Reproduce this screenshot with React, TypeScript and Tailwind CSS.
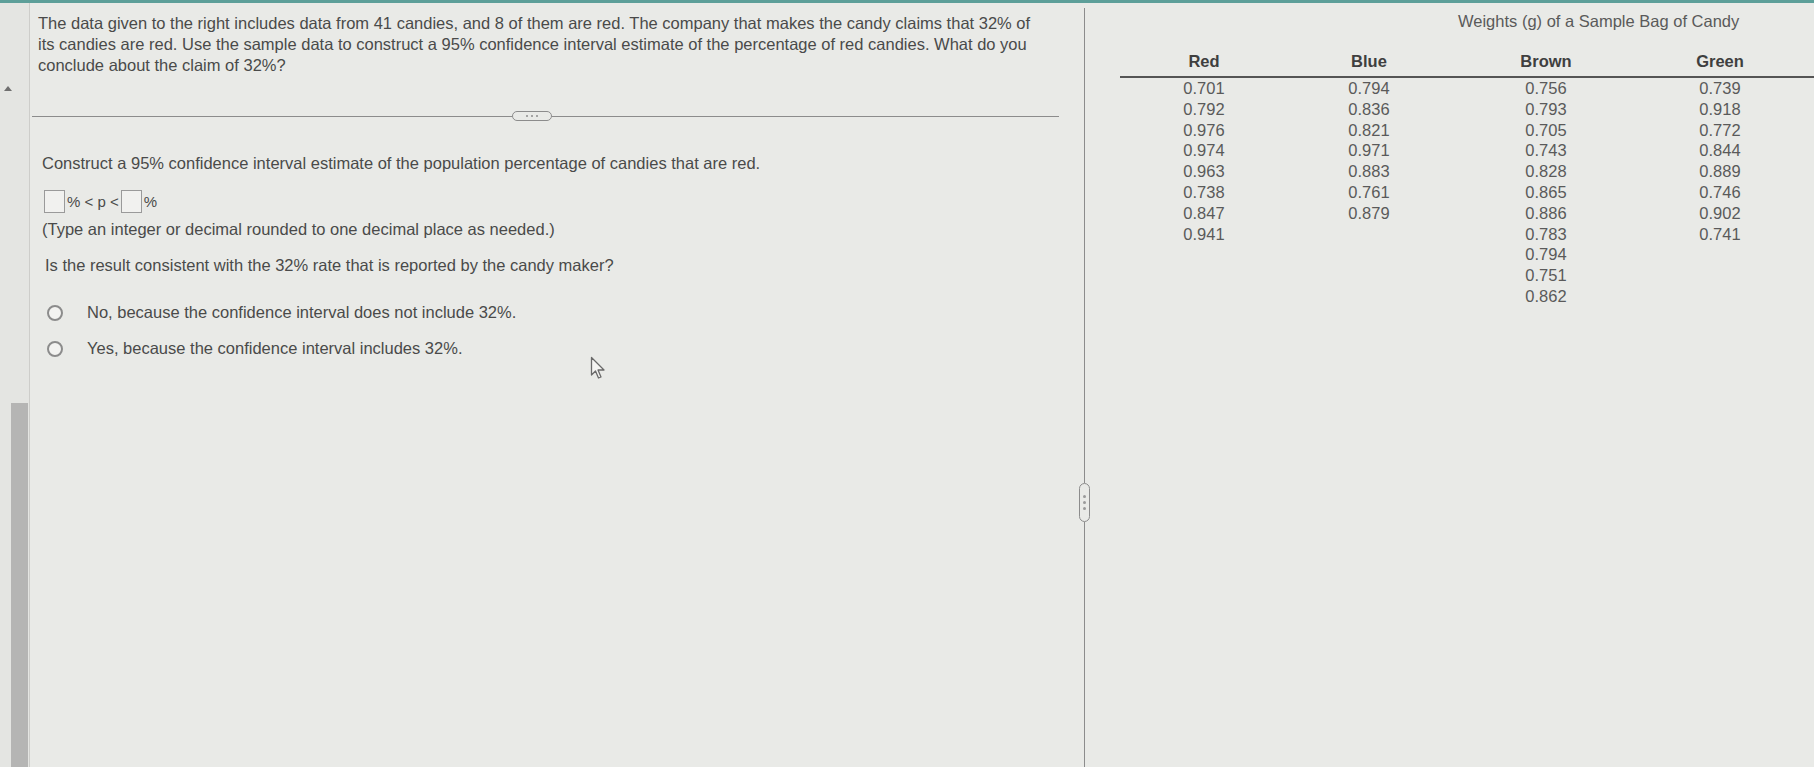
const columns: { name: string; values: string[] }[] = [
  { name: 'Red', values: ['0.701', '0.792', '0.976', '0.974', '0.963', '0.738', '0.847', '0.941'] },
  { name: 'Blue', values: ['0.794', '0.836', '0.821', '0.971', '0.883', '0.761', '0.879'] },
  {
    name: 'Brown',
    values: ['0.756', '0.793', '0.705', '0.743', '0.828', '0.865', '0.886', '0.783', '0.794', '0.751', '0.862'],
  },
  { name: 'Green', values: ['0.739', '0.918', '0.772', '0.844', '0.889', '0.746', '0.902', '0.741'] },
]

function ScrollStrip() {
  return (
    <div className="w-[30px] shrink-0 flex flex-col border-r border-[#cdcdca] bg-[#e4e5e2]">
      <div className="pt-[83px] pl-[4px] h-[89px]">
        <div className="w-0 h-0 border-l-[4px] border-r-[4px] border-b-[5px] border-l-transparent border-r-transparent border-b-[#6f6f6f]" />
      </div>
      <div className="mt-[311px] ml-[11px] w-[17px] flex-1 bg-[#b5b5b4]" />
    </div>
  )
}

function InputBox() {
  return <span className="inline-block w-[21px] h-[23px] border border-[#9a9a9a] bg-[#f1f1ef]" />
}

function Radio({ label }: { label: string }) {
  return (
    <div className="flex items-center h-[21px]">
      <span className="ml-[9px] w-[16px] h-[16px] rounded-full border-2 border-[#8c8c8c] bg-[#f3f3f1]" />
      <span className="ml-[24px]">{label}</span>
    </div>
  )
}

function LeftPanel() {
  return (
    <div className="w-[1048px] shrink-0 pl-[8px] pr-[19px] pt-[10px] text-[16.5px] leading-[21px]">
      <p>
        The data given to the right includes data from 41 candies, and 8 of them are red. The company that makes the candy
        claims that 32% of
        <br />
        its candies are red. Use the sample data to construct a 95% confidence interval estimate of the percentage of red
        candies. What do you
        <br />
        conclude about the claim of 32%?
      </p>

      <div className="mt-[35px] -ml-[6px] h-[10px] flex items-center">
        <div className="h-px w-[480px] bg-[#8c8c8c]" />
        <div className="w-[40px] h-[10px] rounded-full border border-[#8c8c8c] flex items-center justify-center gap-[3px]">
          <span className="w-[2px] h-[2px] rounded-full bg-[#8c8c8c]" />
          <span className="w-[2px] h-[2px] rounded-full bg-[#8c8c8c]" />
          <span className="w-[2px] h-[2px] rounded-full bg-[#8c8c8c]" />
        </div>
        <div className="h-px flex-1 bg-[#8c8c8c]" />
      </div>

      <p className="mt-[32px] pl-[4px]">
        Construct a 95% confidence interval estimate of the population percentage of candies that are red.
      </p>

      <div className="mt-[16px] pl-[6px] flex items-center h-[23px] text-[15px]">
        <InputBox />
        <span className="mx-[2px]">% &lt; p &lt;</span>
        <InputBox />
        <span className="ml-[2px]">%</span>
      </div>

      <p className="mt-[6px] pl-[4px]">(Type an integer or decimal rounded to one decimal place as needed.)</p>

      <p className="mt-[15px] pl-[7px]">Is the result consistent with the 32% rate that is reported by the candy maker?</p>

      <div className="mt-[26px]">
        <Radio label="No, because the confidence interval does not include 32%." />
      </div>
      <div className="mt-[15px]">
        <Radio label="Yes, because the confidence interval includes 32%." />
      </div>
    </div>
  )
}

function Divider() {
  return (
    <div className="w-[12px] shrink-0 flex flex-col items-center pt-[5px]">
      <div className="w-px h-[475px] bg-[#8c8c8c]" />
      <div className="w-[11px] h-[39px] rounded-full border border-[#8c8c8c] flex flex-col items-center justify-center gap-[3px]">
        <span className="w-[3px] h-[3px] rounded-full bg-[#9a9a9a]" />
        <span className="w-[3px] h-[3px] rounded-full bg-[#9a9a9a]" />
        <span className="w-[3px] h-[3px] rounded-full bg-[#9a9a9a]" />
      </div>
      <div className="w-px flex-1 bg-[#8c8c8c]" />
    </div>
  )
}

function RightPanel() {
  return (
    <div className="flex-1 pt-[8px] text-[16.5px] leading-[21px]">
      <div className="pl-[368px] text-[#5a5a5a]">Weights (g) of a Sample Bag of Candy</div>

      <div className="mt-[19px] ml-[30px]">
        <div className="grid grid-cols-[168px_162px_192px_156px] font-bold text-[#3f3f3f]">
          {columns.map((c) => (
            <div key={c.name} className="text-center">
              {c.name}
            </div>
          ))}
        </div>
        <div className="mt-[4px] h-[2px] bg-[#555555]" />
        <div className="grid grid-cols-[168px_162px_192px_156px] text-[#5a5a5a] leading-[20.8px]">
          {columns.map((c) => (
            <div key={c.name} className="flex flex-col items-center">
              {c.values.map((v, i) => (
                <div key={i}>{v}</div>
              ))}
            </div>
          ))}
        </div>
      </div>
    </div>
  )
}

function Cursor() {
  return (
    <svg className="absolute left-[590px] top-[356px]" width="17" height="24" viewBox="0 0 17 24">
      <path
        d="M1.5 1.5 L1.5 19 L5.5 15 L8.5 22 L11 21 L8 14 L14 14 Z"
        fill="#f4f4f2"
        stroke="#6a6a6a"
        strokeWidth="1.3"
        strokeLinejoin="round"
      />
    </svg>
  )
}

export default function App() {
  return (
    <div className="relative w-[1814px] h-[767px] overflow-hidden bg-[#e9eae7] text-[#4a4a4a] font-['Liberation_Sans',Arial,sans-serif]">
      <div className="h-[3px] bg-[#5d9f99]" />
      <div className="flex h-[764px]">
        <ScrollStrip />
        <LeftPanel />
        <Divider />
        <RightPanel />
      </div>
      <Cursor />
    </div>
  )
}
